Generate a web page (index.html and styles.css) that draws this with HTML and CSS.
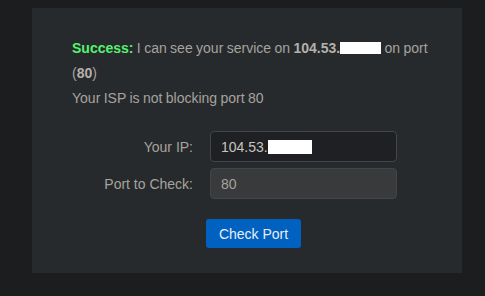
FILE: index.html
```html
<!DOCTYPE html>
<html lang="en">
<head>
  <meta charset="UTF-8">
  <title>Open Port Check</title>
  <link rel="stylesheet" href="styles.css">
</head>
<body>

<div class="panel">
  <p class="result">
    <span class="success">Success:</span> I can see your service on <b>104.53.<span class="mask"></span></b> on port (<b>80</b>)
  </p>
  <p class="result">Your ISP is not blocking port 80</p>

  <form class="check-form" onsubmit="return false;">
    <label for="ip">Your IP:</label>
    <div class="field">
      <span class="value">104.53.</span><span class="mask big"></span>
    </div>

    <label for="port">Port to Check:</label>
    <input type="text" id="port" class="field disabled" value="80" disabled>

    <div class="actions">
      <button type="submit">Check Port</button>
    </div>
  </form>
</div>

</body>
</html>
```

FILE: styles.css
```css
body {
  margin: 0;
  background: #1c1d1f;
  font-family: "Liberation Sans", Arial, sans-serif;
  font-size: 14px;
  color: #a6a39d;
}

.panel {
  margin: 8px 0 0 32px;
  width: 358px;
  height: 237px;
  padding: 28px 32px 0 40px;
  background: #272a2d;
}

.result {
  margin: 0;
  line-height: 25px;
  word-spacing: -0.5px;
}

.success {
  color: #55f26e;
  font-weight: bold;
}

.result b {
  color: #b4b1ab;
}

.mask {
  display: inline-block;
  width: 41px;
  height: 12px;
  background: #fff;
  vertical-align: -1px;
}

.mask.big {
  width: 44px;
  height: 14px;
  vertical-align: -2px;
}

.check-form {
  display: grid;
  grid-template-columns: 121px 187px;
  column-gap: 17px;
  row-gap: 6px;
  margin-top: 20px;
  align-items: center;
}

.check-form label {
  text-align: right;
}

.field {
  box-sizing: border-box;
  height: 31px;
  padding: 0 10px;
  border: 1px solid #434548;
  border-radius: 4px;
  background: #1e2023;
  color: #c6c4bf;
  font-family: inherit;
  font-size: 14px;
  display: flex;
  align-items: center;
  width: 187px;
}

.field.disabled {
  background: #393a3b;
  color: #a6a39d;
}

.actions {
  grid-column: 2;
  margin-top: 14px;
  margin-left: -4px;
}

button {
  width: 95px;
  height: 29px;
  border: none;
  border-radius: 3px;
  background: #0061c0;
  color: #e8eef8;
  font-family: inherit;
  font-size: 14px;
  cursor: pointer;
}
```
